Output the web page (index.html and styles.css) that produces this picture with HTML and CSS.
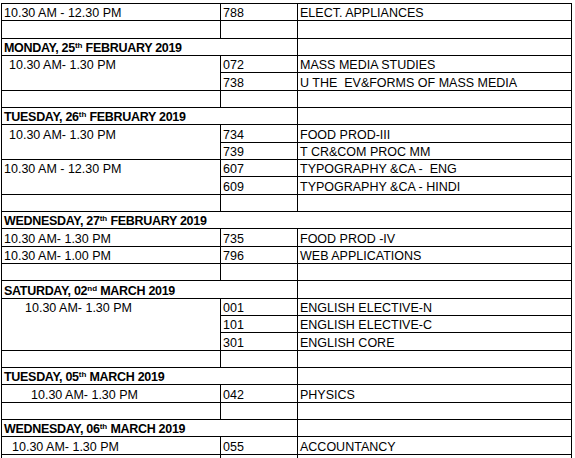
FILE: index.html
```html
<!DOCTYPE html>
<html>
<head>
<meta charset="utf-8">
<link rel="stylesheet" href="styles.css">
</head>
<body>
<table class="sheet">
  <colgroup>
    <col class="c-time">
    <col class="c-code">
    <col class="c-subj">
  </colgroup>
  <tbody>
    <tr><td>10.30 AM - 12.30 PM</td><td>788</td><td>ELECT. APPLIANCES</td></tr>
    <tr><td></td><td></td><td></td></tr>
    <tr><td class="day" colspan="2">MONDAY, 25<sup>th</sup> FEBRUARY 2019</td><td></td></tr>
    <tr><td rowspan="2" class="in1">10.30 AM- 1.30 PM</td><td>072</td><td>MASS MEDIA STUDIES</td></tr>
    <tr><td>738</td><td>U THE&nbsp; EV&amp;FORMS OF MASS MEDIA</td></tr>
    <tr><td></td><td></td><td></td></tr>
    <tr><td class="day" colspan="2">TUESDAY, 26<sup>th</sup> FEBRUARY 2019</td><td></td></tr>
    <tr><td rowspan="2" class="in1">10.30 AM- 1.30 PM</td><td>734</td><td>FOOD PROD-III</td></tr>
    <tr><td>739</td><td>T CR&amp;COM PROC MM</td></tr>
    <tr><td rowspan="2">10.30 AM - 12.30 PM</td><td>607</td><td>TYPOGRAPHY &amp;CA -&nbsp; ENG</td></tr>
    <tr><td>609</td><td>TYPOGRAPHY &amp;CA - HINDI</td></tr>
    <tr><td></td><td></td><td></td></tr>
    <tr><td class="day" colspan="3">WEDNESDAY, 27<sup>th</sup> FEBRUARY 2019</td></tr>
    <tr><td>10.30 AM- 1.30 PM</td><td>735</td><td>FOOD PROD -IV</td></tr>
    <tr><td>10.30 AM- 1.00 PM</td><td>796</td><td>WEB APPLICATIONS</td></tr>
    <tr><td></td><td></td><td></td></tr>
    <tr><td class="day" colspan="2">SATURDAY, 02<sup>nd</sup> MARCH 2019</td><td></td></tr>
    <tr><td rowspan="3" class="in3">10.30 AM- 1.30 PM</td><td>001</td><td>ENGLISH ELECTIVE-N</td></tr>
    <tr><td>101</td><td>ENGLISH ELECTIVE-C</td></tr>
    <tr><td>301</td><td>ENGLISH CORE</td></tr>
    <tr><td></td><td></td><td></td></tr>
    <tr><td class="day" colspan="2">TUESDAY, 05<sup>th</sup> MARCH 2019</td><td></td></tr>
    <tr><td class="in4">10.30 AM- 1.30 PM</td><td>042</td><td>PHYSICS</td></tr>
    <tr><td></td><td></td><td></td></tr>
    <tr><td class="day" colspan="2">WEDNESDAY, 06<sup>th</sup> MARCH 2019</td><td></td></tr>
    <tr><td class="in2">10.30 AM- 1.30 PM</td><td>055</td><td>ACCOUNTANCY</td></tr>
    <tr><td></td><td></td><td></td></tr>
  </tbody>
</table>
</body>
</html>
```
FILE: styles.css
```css
html, body {
  margin: 0;
  padding: 0;
  background: #ffffff;
}

.sheet {
  margin: 3px 0 0 1px;
  border-collapse: collapse;
  table-layout: fixed;
  width: 570px;
  font-family: "Liberation Sans", Arial, sans-serif;
  font-size: 12.5px;
  color: #000000;
}

.c-time { width: 219px; }
.c-code { width: 77px; }
.c-subj { width: 274px; }

.sheet tr {
  height: 17.333px;
}

.sheet td {
  border: 1px solid #000000;
  padding: 2.3px 0 0 2px;
  line-height: 14px;
  height: 17.333px;
  box-sizing: border-box;
  vertical-align: top;
  white-space: nowrap;
  overflow: hidden;
}

.sheet td.day {
  font-weight: bold;
  letter-spacing: -0.3px;
}

.sheet sup {
  font-size: 8px;
  line-height: 0;
  vertical-align: 4px;
  letter-spacing: 0;
}

.sheet td.in1 { padding-left: 7px; }
.sheet td.in2 { padding-left: 10px; }
.sheet td.in3 { padding-left: 23px; }
.sheet td.in4 { padding-left: 29px; }
```
